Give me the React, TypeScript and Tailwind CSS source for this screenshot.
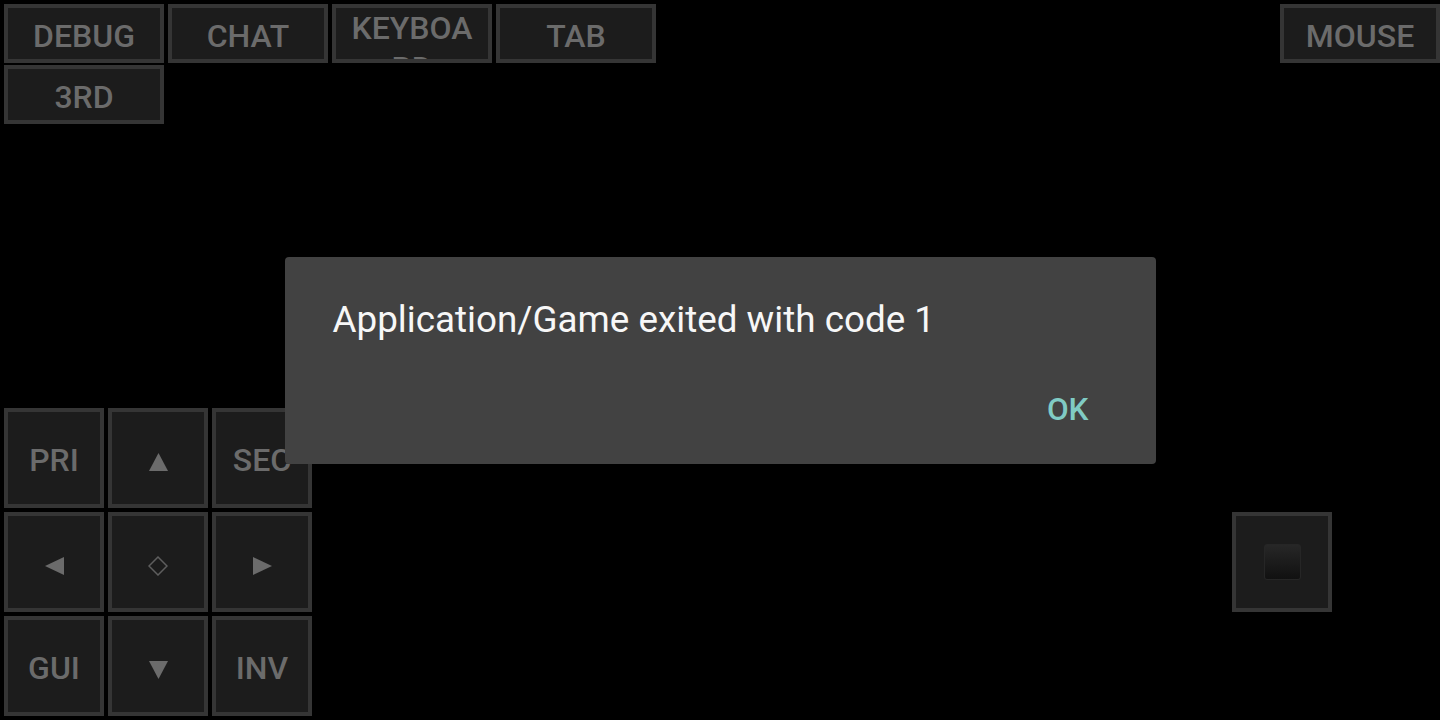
import React from "react";

const topButtons = ["DEBUG", "CHAT", "KEYBOARD", "TAB"];

function KeyButton({ label }: { label: string }) {
  return (
    <div className="flex h-[59px] w-[160px] items-start justify-center overflow-hidden border-4 border-[#353535] bg-[#1c1c1c] px-[10px]">
      <span
        className={
          label.length > 6
            ? "break-all text-center text-[32px] font-medium leading-[40px] text-[#6b6b6b]"
            : "pt-[8px] text-center text-[32px] font-medium leading-[40px] text-[#6b6b6b]"
        }
      >
        {label}
      </span>
    </div>
  );
}

function Tri({ dir }: { dir: "up" | "down" | "left" | "right" }) {
  const pts = {
    up: "9.5,0 19,18 0,18",
    down: "0,0 19,0 9.5,18",
    left: "0,9 19,0 19,18",
    right: "0,0 19,9 0,18",
  }[dir];
  return (
    <svg width={19} height={18} viewBox="0 0 19 18" className="translate-y-[2px]">
      <polygon points={pts} fill="#6b6b6b" />
    </svg>
  );
}

function Diamond() {
  return (
    <svg width={20} height={20} viewBox="0 0 20 20" className="translate-y-[2px]">
      <polygon points="10,1 19,10 10,19 1,10" fill="none" stroke="#5e5e5e" strokeWidth={1.5} />
    </svg>
  );
}

function PadKey({ children }: { children: React.ReactNode }) {
  return (
    <div className="flex h-[100px] w-[100px] items-center justify-center border-4 border-[#353535] bg-[#1c1c1c] pt-[4px] text-[32px] font-medium text-[#6b6b6b]">
      {children}
    </div>
  );
}

export default function App() {
  return (
    <div
      className="relative flex h-[720px] w-full flex-col justify-between overflow-hidden bg-black"
      style={{ fontFamily: "Roboto, 'Noto Sans', sans-serif" }}
    >
      {/* Top controls */}
      <div className="flex items-start justify-between pt-[4px]">
        <div className="flex flex-col gap-[2px] pl-[4px]">
          <div className="flex gap-[4px]">
            {topButtons.map((b) => (
              <KeyButton key={b} label={b} />
            ))}
          </div>
          <KeyButton label="3RD" />
        </div>
        <KeyButton label="MOUSE" />
      </div>

      {/* Bottom controls */}
      <div className="flex items-end justify-between">
        <div className="grid grid-cols-3 gap-[4px] pb-[4px] pl-[4px]">
          <PadKey>PRI</PadKey>
          <PadKey>
            <Tri dir="up" />
          </PadKey>
          <PadKey>SEC</PadKey>
          <PadKey>
            <Tri dir="left" />
          </PadKey>
          <PadKey>
            <Diamond />
          </PadKey>
          <PadKey>
            <Tri dir="right" />
          </PadKey>
          <PadKey>GUI</PadKey>
          <PadKey>
            <Tri dir="down" />
          </PadKey>
          <PadKey>INV</PadKey>
        </div>
        <div className="mb-[108px] mr-[108px] flex h-[100px] w-[100px] items-center justify-center border-4 border-[#353535] bg-[#1c1c1c]">
          <div className="h-[36px] w-[37px] rounded-[3px] border border-[#262626] bg-gradient-to-b from-[#272727] to-[#111111]" />
        </div>
      </div>

      {/* Dialog */}
      <div className="absolute inset-0 flex items-center justify-center">
        <div className="flex h-[207px] w-[871px] flex-col justify-between rounded-[4px] bg-[#424242]">
          <p className="pl-[48px] pt-[42px] text-[36.8px] leading-[42px] text-[#f7f7f7]">
            Application/Game exited with code 1
          </p>
          <div className="flex justify-end pb-[33px] pr-[51px]">
            <button className="px-[16px] text-[31.5px] font-medium leading-[42px] text-[#80cbc4]">OK</button>
          </div>
        </div>
      </div>
    </div>
  );
}
